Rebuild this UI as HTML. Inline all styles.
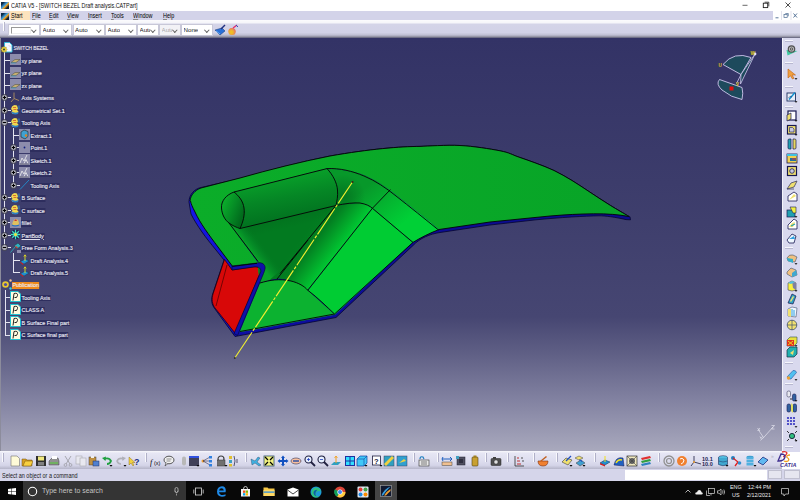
<!DOCTYPE html>
<html><head><meta charset="utf-8">
<style>
*{margin:0;padding:0;box-sizing:border-box}
html,body{width:800px;height:500px;overflow:hidden;background:#fff;font-family:"Liberation Sans",sans-serif}
.a{position:absolute}
#title{left:0;top:0;width:800px;height:11px;background:#fff}
#menu{left:0;top:11px;width:800px;height:9px;background:#d3d3e9}
#tb{left:0;top:20px;width:800px;height:18.5px;background:linear-gradient(#fbfbfd 0,#f6f6fa 2.5px,#d4d4e8 4.5px,#d2d2e7 12.5px,#c0c0d4 15px,#8c8c9c 17px,#383860 18.5px)}
#vp{border-left:1px solid #8c8c9c;left:0;top:38px;width:782px;height:413px;background:linear-gradient(#333366 0%,#3c3c6b 35%,#464672 67.5%,#5e5e84 76%,#8383a2 88%,#a9a9bd 100%)}
#rtb{left:782px;top:38px;width:18px;height:414px;background:#d9d9ee;border-left:1px solid #f4f4fb}
#btb{left:0;top:451px;width:782px;height:18px;background:linear-gradient(#f8f8fc,#e6e6f4 12%,#dcdcee 60%,#d4d4e8 80%,#b4b4c8)}
#sb{left:0;top:469px;width:800px;height:12px;background:#d5d5ea}
#task{left:0;top:481px;width:800px;height:19px;background:#080808}
.t{position:absolute;white-space:nowrap;line-height:1;font-size:5.5px;color:#1a1a1a}
.m{position:absolute;white-space:nowrap;line-height:1;font-size:6.3px;color:#000;top:12.9px;transform:scaleX(0.87);transform-origin:0 0}
.m u{text-decoration:underline;text-decoration-thickness:0.4px;text-underline-offset:0.7px;text-decoration-color:#888}
.cb{position:absolute;top:24px;height:12px;background:#fff;border:1px solid #c8c8d8}
.cb span{position:absolute;left:1.5px;top:2.3px;font-size:6.2px;line-height:1;color:#222;overflow:hidden;white-space:nowrap}
.cb i{position:absolute;right:2.5px;top:4px;width:5px;height:3px;background:no-repeat center/5px 3px}
.cb i:before{content:"";position:absolute;left:0.9px;top:-1.2px;width:2.6px;height:2.6px;border-right:0.6px solid #666;border-bottom:0.6px solid #666;transform:rotate(45deg)}
.tt{position:absolute;white-space:nowrap;line-height:6.6px;height:6.6px;font-size:6.2px;color:#f2f2f8;padding:0 0.6px;background:#2e2e5e;transform:scaleX(0.875);transform-origin:0 0;-webkit-text-stroke:0.15px #e0e0ee}
svg{display:block}
</style></head><body>

<div id="title" class="a">
  <div class="a" style="left:1px;top:2px;width:8px;height:7px;background:linear-gradient(135deg,#0a2a4a 20%,#3fa0e0 45%,#f0a020 60%,#102030 80%)"></div>
  <div class="t" style="left:11px;top:2.9px;font-size:6.3px;color:#111;transform:scaleX(0.855);transform-origin:0 0">CATIA V5 - [SWITCH BEZEL Draft analysis.CATPart]</div>
  <svg class="a" style="left:740px;top:0" width="60" height="11" viewBox="0 0 60 11"><path d="M2.5 5.3h5" stroke="#444" stroke-width="0.8"/><rect x="23.3" y="3.2" width="4.4" height="4.4" fill="none" stroke="#222" stroke-width="0.9"/><path d="M24.6 2.2h4.2v4.2" fill="none" stroke="#222" stroke-width="0.8"/><path d="M45.5 2.5l5 5M50.5 2.5l-5 5" stroke="#222" stroke-width="0.8"/></svg></div>
</div>
<div id="menu" class="a">
  <div class="a" style="left:1px;top:1.5px;width:8px;height:7px;background:linear-gradient(135deg,#0a2a4a 20%,#3fa0e0 45%,#f0a020 60%,#102030 80%)"></div>
  <div class="a" style="left:10px;top:0;width:20px;height:9px;background:#fde3bd"></div>
  <svg class="a" style="left:773px;top:0" width="27" height="9" viewBox="0 0 27 9"><rect x="0" y="0" width="27" height="9" fill="#fff"/><path d="M8.5 0v9M18 0v9" stroke="#dcdce8" stroke-width="0.8"/><path d="M2.5 6.8h3" stroke="#4a6a90" stroke-width="0.9"/><rect x="11" y="3.5" width="3.2" height="3" fill="none" stroke="#4a6a90" stroke-width="0.7"/><path d="M12.3 2.5h3v2.8" fill="none" stroke="#4a6a90" stroke-width="0.7"/><path d="M20.5 2.5l3.5 4M24 2.5l-3.5 4" stroke="#4a6a90" stroke-width="0.9"/></svg></div>
</div>
<div class="m" style="left:11px"><u>S</u>tart</div>
<div class="m" style="left:31.5px"><u>F</u>ile</div>
<div class="m" style="left:48.5px"><u>E</u>dit</div>
<div class="m" style="left:67.4px"><u>V</u>iew</div>
<div class="m" style="left:87.5px"><u>I</u>nsert</div>
<div class="m" style="left:111px"><u>T</u>ools</div>
<div class="m" style="left:133.4px"><u>W</u>indow</div>
<div class="m" style="left:163px"><u>H</u>elp</div>
<div id="tb" class="a">
  <div class="a" style="left:3px;top:2px;width:2px;height:9px;background:#fff;border-right:1px solid #b8b8cc"></div>
</div>
<div class="cb" style="left:8px;width:32px"><div class="a" style="left:2px;top:2px;width:20px;height:7px;border:1px solid #999;border-right-color:#eee;border-bottom-color:#eee"></div><i></i></div>
<div class="cb" style="left:40px;width:32px"><span>Auto</span><i></i></div>
<div class="cb" style="left:72.5px;width:32px"><span>Auto</span><i></i></div>
<div class="cb" style="left:105px;width:31.5px"><span>Auto</span><i></i></div>
<div class="cb" style="left:137px;width:21.5px"><span style="width:10.5px">Auto</span><i></i></div>
<div class="cb" style="left:159px;width:21.5px;background:#f2f2f6"><span style="color:#aaa;width:10.5px">Auto</span><i></i></div>
<div class="cb" style="left:181px;width:31.5px"><span style="top:1.8px">None</span><i></i></div>
<svg class="a" style="left:213.5px;top:23.5px" width="12" height="12" viewBox="0 0 12 12"><path d="M1 6 L6 11 L11 7 L8 4z" fill="#2a70d8" stroke="#103070" stroke-width="0.5"/><path d="M7 5 L11 1" stroke="#203080" stroke-width="1.5"/><path d="M2 7 L6 10" stroke="#80c0ff" stroke-width="0.8"/></svg>
<svg class="a" style="left:227px;top:23.5px" width="12" height="12" viewBox="0 0 12 12"><circle cx="5" cy="7.5" r="3.6" fill="#f0c020"/><circle cx="5" cy="7.5" r="3.6" fill="url(#ballg)"/><path d="M6 4 L10 1" stroke="#e03070" stroke-width="1.4"/><path d="M9 1 L11 3" stroke="#3050c0" stroke-width="1"/><defs><radialGradient id="ballg" cx="0.4" cy="0.6" r="0.6"><stop offset="0" stop-color="#f0d030" stop-opacity="0"/><stop offset="1" stop-color="#e04090" stop-opacity="0.7"/></radialGradient></defs></svg>
<div id="vp" class="a"></div>
<div id="rtb" class="a"></div>
<div id="btb" class="a"></div>
<div id="sb" class="a">
  <div class="t" style="left:2px;top:4.1px;font-size:6.3px;color:#1a1a1a;transform:scaleX(0.87);transform-origin:0 0">Select an object or a command</div>
  <div class="a" style="left:625px;top:1px;width:142px;height:9.5px;background:#fff"></div>
  <div class="a" style="left:768px;top:1px;width:14px;height:9px;background:#e6e6f0;border:1px solid #c0c0d0"></div>
  <div class="a" style="left:784px;top:1px;width:16px;height:9px;background:#e6e6f0;border:1px solid #c0c0d0"></div>
</div>
<div id="task" class="a">
  <svg class="a" style="left:7.5px;top:7px" width="8" height="7" viewBox="0 0 8 7"><path d="M0 1 L3.5 0.5 V3.2 H0z M4 0.4 L8 0 V3.2 H4z M0 3.7 H3.5 V6.5 L0 6z M4 3.7 H8 V7 L4 6.6z" fill="#fff"/></svg>
  <div class="a" style="left:22.5px;top:0;width:163.5px;height:20px;background:#343434"></div>
  <svg class="a" style="left:26.5px;top:5px" width="11" height="11" viewBox="0 0 11 11"><circle cx="5.5" cy="5.5" r="4.2" fill="none" stroke="#fff" stroke-width="1.1"/></svg>
  <div class="t" style="left:42px;top:7.3px;font-size:6.9px;color:#c4c4c4">Type here to search</div>
  <svg class="a" style="left:174px;top:6px" width="5" height="9" viewBox="0 0 5 9"><rect x="1" y="0.5" width="3" height="5" rx="1.5" fill="none" stroke="#bbb" stroke-width="0.8"/><path d="M0.5 4 Q2.5 7 4.5 4 M2.5 6.5 V8.5" stroke="#bbb" stroke-width="0.7" fill="none"/></svg>
  <svg class="a" style="left:193px;top:6px" width="11" height="9" viewBox="0 0 11 9"><rect x="2.5" y="1" width="6" height="7" fill="none" stroke="#ddd" stroke-width="0.8"/><path d="M0.8 2.5 V6.5 M10.2 2.5 V6.5" stroke="#ddd" stroke-width="0.8"/></svg>
  <svg class="a" style="left:216px;top:5px" width="11" height="11" viewBox="0 0 11 11"><path d="M9.5 6.2 H3 Q3.5 9 6.5 9 Q8.5 9 9.5 8.2 V10 Q8 10.8 6 10.8 Q1 10.5 1 5.5 Q1.2 0.5 6 0.3 Q10 0.5 9.8 5 Z M3 4.5 H7.8 Q7.5 2.2 5.5 2.2 Q3.5 2.3 3 4.5z" fill="#1e88e5"/></svg>
  <svg class="a" style="left:239.5px;top:5px" width="11" height="11" viewBox="0 0 11 11"><path d="M3.5 3 Q3.5 0.5 5.5 0.5 Q7.5 0.5 7.5 3" fill="none" stroke="#eee" stroke-width="0.8"/><rect x="1" y="3" width="9" height="7.5" fill="#f4f4f4"/><rect x="3" y="4.5" width="2.3" height="2.3" fill="#f25022"/><rect x="5.7" y="4.5" width="2.3" height="2.3" fill="#7fba00"/><rect x="3" y="7.2" width="2.3" height="2.3" fill="#00a4ef"/><rect x="5.7" y="7.2" width="2.3" height="2.3" fill="#ffb900"/></svg>
  <svg class="a" style="left:263px;top:5px" width="12" height="11" viewBox="0 0 12 11"><path d="M0.5 1.5 H4.5 L5.5 2.5 H11.5 V10 H0.5z" fill="#f8c846"/><rect x="0.5" y="4" width="11" height="6" fill="#ffd865"/><rect x="0.5" y="5.5" width="11" height="1.2" fill="#1e88e5"/></svg>
  <svg class="a" style="left:286.5px;top:5.5px" width="12" height="10" viewBox="0 0 12 10"><path d="M0.5 2.5 L6 0.5 L11.5 2.5 V9.5 H0.5z" fill="#fff"/><path d="M0.5 3 L6 7 L11.5 3" fill="none" stroke="#333" stroke-width="0.9"/></svg>
  <svg class="a" style="left:310px;top:5px" width="12" height="12" viewBox="0 0 12 12"><circle cx="6" cy="6" r="5.5" fill="#1d9ad8"/><path d="M1.5 6.5 Q2 2 6.5 1.5 Q10 1.8 10.8 5.5 Q9 4.5 7 5.5 Q5 7 6 9.5 Q7 11 10 10.5 Q7.5 12 4.5 11.3 Q1 10 1.5 6.5z" fill="#2ec27e"/><path d="M3.5 6.5 Q4 3.5 7.5 3.8 Q6 5 5.5 7 Q5 9 6.5 10.5 Q3.5 9.5 3.5 6.5z" fill="#0f5fa8"/></svg>
  <svg class="a" style="left:333.5px;top:5px" width="12" height="12" viewBox="0 0 12 12"><circle cx="6" cy="6" r="5.5" fill="#db4437"/><path d="M6 6 L0.8 3.2 A5.5 5.5 0 0 0 3.3 10.8z" fill="#0f9d58"/><path d="M6 6 L3.3 10.8 A5.5 5.5 0 0 0 11.5 6z" fill="#ffcd40"/><circle cx="6" cy="6" r="2.6" fill="#fff"/><circle cx="6" cy="6" r="2" fill="#4285f4"/></svg>
  <svg class="a" style="left:357px;top:5px" width="12" height="12" viewBox="0 0 12 12"><rect x="0.5" y="0.5" width="11" height="11" rx="1" fill="#dfe6f0"/><circle cx="3.5" cy="3.5" r="2" fill="#e53935"/><circle cx="8.5" cy="3.5" r="2" fill="#43a047"/><circle cx="3.5" cy="8.5" r="2" fill="#1e88e5"/><circle cx="8.5" cy="8.5" r="2" fill="#fb8c00"/></svg>
  <div class="a" style="left:375px;top:0;width:22px;height:20px;background:#444"></div>
  <svg class="a" style="left:380px;top:4px" width="12" height="12" viewBox="0 0 12 12"><rect x="0.5" y="0.5" width="11" height="11" fill="#101830" stroke="#aaa" stroke-width="0.6"/><path d="M1.5 10.5 Q4 4 10.5 1.5 Q6 6 3 10.5z" fill="#3aa0e0"/><path d="M4 10.5 Q7 6 10.5 4 V6 Q8 8 6 10.5z" fill="#f0a030"/></svg>
  <div class="a" style="left:258px;top:19px;width:21px;height:1px;background:#76b9ed"></div>
  <div class="a" style="left:329px;top:19px;width:21px;height:1px;background:#76b9ed"></div>
  <div class="a" style="left:352px;top:19px;width:21px;height:1px;background:#76b9ed"></div>
  <div class="a" style="left:375px;top:19px;width:22px;height:1px;background:#99ccf3"></div>
  <svg class="a" style="left:685px;top:8px" width="6" height="4" viewBox="0 0 6 4"><path d="M0.5 3.5 L3 1 L5.5 3.5" fill="none" stroke="#ddd" stroke-width="0.8"/></svg>
  <svg class="a" style="left:694.5px;top:7.5px" width="8" height="6" viewBox="0 0 8 6"><path d="M1.5 5.5 Q0 5.5 0.3 4 Q0.8 3 2 3.2 Q2.5 1 4.5 1 Q6.5 1.2 6.5 3.2 Q8 3.5 7.8 4.5 Q7.6 5.5 6.5 5.5z" fill="#eee"/></svg>
  <svg class="a" style="left:705.5px;top:6.5px" width="9" height="8" viewBox="0 0 9 8"><rect x="2.5" y="0.5" width="6" height="5" fill="none" stroke="#ddd" stroke-width="0.7"/><path d="M0.5 2.5 V7.5 H4 M5 5.5 V7.5" stroke="#ddd" stroke-width="0.7" fill="none"/></svg>
  <svg class="a" style="left:716.5px;top:6.5px" width="9" height="8" viewBox="0 0 9 8"><path d="M0.5 2.8 H2 L4 1 V7 L2 5.2 H0.5z" fill="none" stroke="#ddd" stroke-width="0.7"/><path d="M5.5 2.5 Q6.5 4 5.5 5.5 M6.8 1.5 Q8.5 4 6.8 6.5" fill="none" stroke="#ddd" stroke-width="0.7"/></svg>
  <div class="t" style="left:730px;top:4px;font-size:5.4px;color:#eee">ENG</div>
  <div class="t" style="left:732px;top:11.5px;font-size:5.4px;color:#eee">US</div>
  <div class="t" style="left:748px;top:4px;font-size:5.4px;color:#eee">12:44 PM</div>
  <div class="t" style="left:747px;top:11.5px;font-size:5.4px;color:#eee">2/12/2021</div>
  <svg class="a" style="left:780.5px;top:6.5px" width="8" height="9" viewBox="0 0 8 9"><path d="M0.5 0.5 H7.5 V6 H4.5 L3 8 L2.8 6 H0.5z" fill="none" stroke="#ddd" stroke-width="0.7"/></svg>
</div>
</div>

<svg class="a" style="left:0;top:0" width="800" height="500" viewBox="0 0 800 500">
<defs><linearGradient id="gBlue" gradientUnits="userSpaceOnUse" x1="190" y1="0" x2="630" y2="0"><stop offset="0" stop-color="#1616e8"/><stop offset="0.08" stop-color="#1313d0"/><stop offset="0.11" stop-color="#0e0ea6"/><stop offset="0.4" stop-color="#0c0c96"/><stop offset="1" stop-color="#0c0c8c"/></linearGradient>
<linearGradient id="gWing" x1="0" y1="0" x2="1" y2="0"><stop offset="0" stop-color="#0bad29"/><stop offset="1" stop-color="#08a427"/></linearGradient>
<linearGradient id="gCyl" gradientUnits="userSpaceOnUse" x1="280" y1="178" x2="287" y2="218"><stop offset="0" stop-color="#089e29"/><stop offset="0.5" stop-color="#058625"/><stop offset="1" stop-color="#027420"/></linearGradient><radialGradient id="gShade" gradientUnits="userSpaceOnUse" cx="343" cy="196" r="22"><stop offset="0" stop-color="#015a18" stop-opacity="0.55"/><stop offset="1" stop-color="#015a18" stop-opacity="0"/></radialGradient><linearGradient id="gShade2" gradientUnits="userSpaceOnUse" x1="275" y1="205" x2="281" y2="230"><stop offset="0" stop-color="#014f15" stop-opacity="0.35"/><stop offset="1" stop-color="#014f15" stop-opacity="0"/></linearGradient>
<linearGradient id="gPocket" gradientUnits="userSpaceOnUse" x1="310" y1="226" x2="340" y2="249"><stop offset="0" stop-color="#027a20"/><stop offset="0.35" stop-color="#037f21"/><stop offset="0.7" stop-color="#03a62a"/><stop offset="1" stop-color="#00c832"/></linearGradient>
<linearGradient id="gFil" gradientUnits="userSpaceOnUse" x1="372" y1="182" x2="405" y2="222"><stop offset="0" stop-color="#07982a"/><stop offset="0.5" stop-color="#04b530"/><stop offset="1" stop-color="#00d036"/></linearGradient>
<linearGradient id="gEnd" gradientUnits="userSpaceOnUse" x1="224" y1="204" x2="244" y2="212"><stop offset="0" stop-color="#0aa82a"/><stop offset="0.5" stop-color="#058a25"/><stop offset="1" stop-color="#016a1c"/></linearGradient>
<linearGradient id="gWall" gradientUnits="userSpaceOnUse" x1="243.5" y1="242" x2="255" y2="233.3"><stop offset="0" stop-color="#0aa82b" stop-opacity="0.9"/><stop offset="0.5" stop-color="#06922a" stop-opacity="0.5"/><stop offset="1" stop-color="#027a20" stop-opacity="0"/></linearGradient><clipPath id="cPocket"><path d="M234 192 L327 168.6 C333 175 337 183 337.5 190 C338 196 337 201 336 205.5 C345 204 354 203 360 203 C366 204 370 206 372.4 208.3 L307.6 290.4 C300 284 292 280 279 278.5 C272 279 266 281 260 283 C259 277 258 268 258 261.5 L229 223 C225 220 222 215 221.5 208 C221 201 226 195 234 192 Z"/></clipPath></defs>
<!-- blue silhouette -->
<path d="M189 202 C189 195 194 189 201 187.5 L240 178.5 C270 170 300 162 330 156 C370 149 400 146.5 420 146.4 C426.7 146.2 446.7 144.8 460 145.5 C473.3 146.2 490.3 148.9 500 150.8 C509.7 152.7 512.0 154.7 518 156.8 C524.0 158.9 530.0 160.9 536 163.2 C542.0 165.5 548.0 167.6 554 170.5 C560.0 173.4 566.0 176.9 572 180.5 C578.0 184.1 584.0 188.3 590 192.2 C596.0 196.1 602.0 200.2 608 203.9 C614.0 207.7 622.3 212.5 626 214.7 C629.7 216.8 629.3 216.5 630 216.8 L630.5 219.8 L626 219.6 C615 217 605 215.8 599 215.8 C585 216 560 217.5 536 219.8 L490 225 L440 232.5 C430 234 420 238 413 245.5 L336 317.5 L235 336.5 L215 309 C211 304 211 299 213 293 L224 260 L216 250 C206 238 197 226 191 214 Z" fill="url(#gBlue)" stroke="#050530" stroke-width="0.8"/>
<!-- red face -->
<path d="M224.5 259.5 L232 270 L254 266.8 C258 266.5 261 268 261 271 L235 333 L215 308 C212 304 211.5 299 213 294 Z" fill="#d80808" stroke="#200" stroke-width="0.7"/>
<path d="M227 265 L216 306" stroke="#300" stroke-width="0.6" fill="none"/>
<!-- bottom floor (medium green) + bright wall -->
<path d="M239.5 332.3 L260 283 C270 280 279 278.5 291 281 C299 283 304 286 308 290.4 L334.8 314.8 Z" fill="#0cb230" />
<path d="M308 290.4 C318 298 326 306 334.8 314.8 L412.5 242.5 C398 230 385 219 372.4 208.3 Z" fill="#00cc33"/>
<!-- wing/flange top -->
<path d="M190 201 C190.5 195 195 190 201 188 L240 178 C270 169.5 300 162 330 156 C370 149 400 146.5 420 146.4 C426.7 146.2 446.7 144.8 460 145.5 C473.3 146.2 490.3 148.9 500 150.8 C509.7 152.7 512.0 154.7 518 156.8 C524.0 158.9 530.0 160.9 536 163.2 C542.0 165.5 548.0 167.6 554 170.5 C560.0 173.4 566.0 176.9 572 180.5 C578.0 184.1 584.0 188.3 590 192.2 C596.0 196.1 602.0 200.2 608 203.9 C614.0 207.7 622.3 212.5 626 214.7 C629.7 216.8 629.3 216.5 628.5 216.5 C610 212.5 580 213.5 550 216 L490 222 L439 229.5 C430 221 420 214 414 209 C405 202 398 196 390 190.5 C380 183 365 173 348 171 C340 169.5 333 168.5 327 168.6 L234 192 C226 195 221 201 221.5 208 C222 215 225 220 229 223 L257.5 262 C258.5 262.5 258.5 263 257 263.3 L232.6 266.4 L218 247 C209 235 200 223 195 212 C192.5 207 191 204 190.5 201 Z" fill="url(#gWing)"/>
<!-- pocket -->
<path d="M234 192 L327 168.6 C333 175 337 183 337.5 190 C338 196 337 201 336 205.5 C345 204 354 203 360 203 C366 204 370 206 372.4 208.3 L307.6 290.4 C300 284 292 280 279 278.5 C272 279 266 281 260 283 C259 277 258 268 258 261.5 L229 223 C225 220 222 215 221.5 208 C221 201 226 195 234 192 Z" fill="url(#gPocket)"/>
<!-- cylinder surface -->
<path d="M234 192 L327 168.6 C333 175 337 183 337.5 190 C338 196 337 201 336 205.5 L240 228.5 C243 222 245 215 244 208 C243 201 239 196 234 192 Z" fill="url(#gCyl)"/>
<!-- cylinder end cap -->
<path d="M234 192 C239 196 243 201 244 208 C245 215 243 222 240 228.5 C235 227 231 226 229 223 C225 220 222 215 221.5 208 C221 201 226 195 234 192 Z" fill="url(#gEnd)"/>
<!-- wall fillet -->
<path d="M327 168.6 C333 168.5 340 169.5 348 171 C365 173 380 183 390 190.5 C398 196 405 202 414 209 C420 214 430 221 439 229.5 C430 233 420 238 413 242.4 L372.4 208.3 C370 206 366 204 360 203 C354 203 345 204 336 205.5 C337 201 338 196 337.5 190 C337 183 333 175 327 168.6 Z" fill="url(#gFil)"/>
<path d="M327 168.6 C340 168 352 171 364 176 C376 181 386 188 390.4 189.6 L372.4 208.3 C366 204 354 203 336 205.5 C337 201 338 196 337.5 190 C337 183 333 175 327 168.6 Z" fill="url(#gShade)"/>
<path d="M240 228.5 L336 205.5 L320 225 L250 245 Z" fill="url(#gShade2)"/>
<path d="M226 222 L240 228.5 L270 221.3 L290 262 L258 290 Z" fill="url(#gWall)" clip-path="url(#cPocket)"/>
<!-- flange underside green strip near red -->
<path d="M229 223 L258 261.5 C261 262.5 263 264 263.5 266 L261 276 L260 283 C259 277 258.5 268 258 261.5" fill="#057a20"/>
<path d="M232 266 L257 263 C260.5 262.3 264 263 265 266.5 C265.5 268.5 264.5 271 263.5 273.5 L237.5 335.5 L234 333.5 L260.8 271.5 C261 268.5 259 266.8 255 266.8 L232 270 Z" fill="#1010a8" stroke="#050530" stroke-width="0.6"/>
<!-- lines -->
<g fill="none" stroke="#050505" stroke-width="0.9">
<path d="M234 192 L327 168.6 C340 168 352 171 364 176 C376 181 386 188 396 196 C410 207 425 219 438.5 230"/>
<path d="M234 192 C226 195 221 201 221.5 208 C222 215 225 220 229 223 C233 226 237 227.5 240 228.5"/>
<path d="M234 192 C239 196 243 201 244 208 C245 215 243 222 240 228.5 L336 205.5"/>
<path d="M327 168.6 C333 175 337 183 337.5 190 C338 196 337 201 336 205.5 C345 203.5 354 202.5 360 203 C366 204 370 206 372.4 208.3"/>
<path d="M390.4 189.6 L372.4 208.3 L307.6 290.4"/>
<path d="M372.4 208.3 L413 242.4"/>
<path d="M229 223 L258 261.5"/>
<path d="M336 205.5 L280 273.6"/>
<path d="M260 283 C270 280 279 278.5 291 281 C299 283 304 286 308 290.4 C318 298 326 306 334.5 314"/>
<path d="M277 279 L308 240"/>
<path d="M190 201 C190.5 195 195 190 201 188 L240 178 C270 169.5 300 162 330 156 C370 149 400 146.5 420 146.4 C426.7 146.2 446.7 144.8 460 145.5 C473.3 146.2 490.3 148.9 500 150.8 C509.7 152.7 512.0 154.7 518 156.8 C524.0 158.9 530.0 160.9 536 163.2 C542.0 165.5 548.0 167.6 554 170.5 C560.0 173.4 566.0 176.9 572 180.5 C578.0 184.1 584.0 188.3 590 192.2 C596.0 196.1 602.0 200.2 608 203.9 C614.0 207.7 622.3 212.5 626 214.7 C629.7 216.8 629.3 216.5 628.5 216.5"/>
<path d="M628.5 216.5 C610 212.5 580 213.5 550 216 L490 222 L439 229.5 C430 233 420 238 413 242.4 L334.5 314 L240 331.5"/>
<path d="M190.5 201 C191 204 192.5 207 195 212 C200 223 209 235 218 247 L232.6 266.4 L257 263.3"/>
</g>
<!-- yellow axis -->
<path d="M234.8 358 L352.5 182" stroke="#f0ee30" stroke-width="1.15" stroke-dasharray="31 1.6 3 1.6" fill="none"/>
<circle cx="352.5" cy="182" r="1" fill="#402010"/>
<circle cx="234.8" cy="358" r="1" fill="#303030"/>
<!-- compass -->
<g>
<path d="M723 64.5 Q734 51 751 57.5 L741 74.5 Z" fill="#1d4a5c" stroke="#cfc6ee" stroke-width="0.9" stroke-linejoin="round"/>
<path d="M741 74.5 L755 54 L740.5 84 Z" fill="#1d4a5c" stroke="#cfc6ee" stroke-width="0.8" stroke-linejoin="round"/>
<path d="M741 74.5 L736.5 83.5" stroke="#cfc6ee" stroke-width="0.8"/>
<path d="M719.5 79.5 Q715.5 84 722 90 Q731 97.5 742 99.5 Q743.5 93 742 87.5 Z" fill="#1d4a5c" stroke="#cfc6ee" stroke-width="0.9" stroke-linejoin="round"/>
<rect x="729.5" y="86.5" width="4" height="4" fill="#e01010"/>
<circle cx="755" cy="54" r="1.4" fill="#e8e0ff"/>
<text x="750.5" y="55" font-size="5" fill="#e0d020" font-family="Liberation Sans" font-weight="bold">W</text>
<text x="718.5" y="66.5" font-size="4.5" fill="#e0d020" font-family="Liberation Sans" font-weight="bold">U</text>
<text x="736" y="85.5" font-size="4.5" fill="#e0d020" font-family="Liberation Sans" font-weight="bold">V</text>
</g>
<g stroke="#f0f0f8" stroke-width="0.6" fill="none">
<path d="M763.6 437.6 L773.2 426.8 M763.6 437.6 L758.4 430 M763.6 437.6 L760.4 440.4"/>
<path d="M771.5 425.5 h3 l-3 3.5 h3 M757.5 428 l2.5 3 M760 428 l-2.5 3 M760 436.5 l1 2 l1.5-2"/>
</g>
</svg>

<div class="a" style="left:4px;top:52.0px;width:1px;height:195.7px;background:#e4e4f0"></div>
<div class="a" style="left:4px;top:60.0px;width:7px;height:1px;background:#e4e4f0"></div>
<div class="a" style="left:4px;top:72.5px;width:7px;height:1px;background:#e4e4f0"></div>
<div class="a" style="left:4px;top:84.9px;width:7px;height:1px;background:#e4e4f0"></div>
<div class="a" style="left:4px;top:97.4px;width:7px;height:1px;background:#e4e4f0"></div>
<div class="a" style="left:4px;top:109.9px;width:7px;height:1px;background:#e4e4f0"></div>
<div class="a" style="left:4px;top:122.4px;width:7px;height:1px;background:#e4e4f0"></div>
<div class="a" style="left:4px;top:197.3px;width:7px;height:1px;background:#e4e4f0"></div>
<div class="a" style="left:4px;top:209.7px;width:7px;height:1px;background:#e4e4f0"></div>
<div class="a" style="left:4px;top:222.2px;width:7px;height:1px;background:#e4e4f0"></div>
<div class="a" style="left:4px;top:234.7px;width:7px;height:1px;background:#e4e4f0"></div>
<div class="a" style="left:4px;top:247.2px;width:7px;height:1px;background:#e4e4f0"></div>
<div class="a" style="left:13px;top:127.9px;width:1px;height:57.4px;background:#e4e4f0"></div>
<div class="a" style="left:13px;top:134.9px;width:7px;height:1px;background:#e4e4f0"></div>
<div class="a" style="left:13px;top:147.3px;width:7px;height:1px;background:#e4e4f0"></div>
<div class="a" style="left:13px;top:159.8px;width:7px;height:1px;background:#e4e4f0"></div>
<div class="a" style="left:13px;top:172.3px;width:7px;height:1px;background:#e4e4f0"></div>
<div class="a" style="left:13px;top:184.8px;width:7px;height:1px;background:#e4e4f0"></div>
<div class="a" style="left:13px;top:252.7px;width:1px;height:20.0px;background:#e4e4f0"></div>
<div class="a" style="left:13px;top:259.7px;width:7px;height:1px;background:#e4e4f0"></div>
<div class="a" style="left:13px;top:272.1px;width:7px;height:1px;background:#e4e4f0"></div>
<div class="a" style="left:5px;top:290.1px;width:1px;height:44.9px;background:#e4e4f0"></div>
<div class="a" style="left:5px;top:297.1px;width:6px;height:1px;background:#e4e4f0"></div>
<div class="a" style="left:5px;top:309.6px;width:6px;height:1px;background:#e4e4f0"></div>
<div class="a" style="left:5px;top:322.1px;width:6px;height:1px;background:#e4e4f0"></div>
<div class="a" style="left:5px;top:334.5px;width:6px;height:1px;background:#e4e4f0"></div>
<div class="a" style="left:1.0px;top:94.4px;width:7px;height:7px"><svg width="7" height="7" viewBox="0 0 7 7"><circle cx="3.5" cy="3.5" r="3.1" fill="#a8a8b4" stroke="#2a2a3a" stroke-width="0.8"/><path d="M1.8 3.5h3.4" stroke="#000" stroke-width="1"/><path d="M3.5 1.8v3.4" stroke="#000" stroke-width="1"/></svg></div>
<div class="a" style="left:1.0px;top:106.9px;width:7px;height:7px"><svg width="7" height="7" viewBox="0 0 7 7"><circle cx="3.5" cy="3.5" r="3.1" fill="#a8a8b4" stroke="#2a2a3a" stroke-width="0.8"/><path d="M1.8 3.5h3.4" stroke="#000" stroke-width="1"/><path d="M3.5 1.8v3.4" stroke="#000" stroke-width="1"/></svg></div>
<div class="a" style="left:1.0px;top:119.4px;width:7px;height:7px"><svg width="7" height="7" viewBox="0 0 7 7"><circle cx="3.5" cy="3.5" r="3.1" fill="#a8a8b4" stroke="#2a2a3a" stroke-width="0.8"/><path d="M1.8 3.5h3.4" stroke="#000" stroke-width="1"/></svg></div>
<div class="a" style="left:10.0px;top:144.3px;width:7px;height:7px"><svg width="7" height="7" viewBox="0 0 7 7"><circle cx="3.5" cy="3.5" r="3.1" fill="#a8a8b4" stroke="#2a2a3a" stroke-width="0.8"/><path d="M1.8 3.5h3.4" stroke="#000" stroke-width="1"/><path d="M3.5 1.8v3.4" stroke="#000" stroke-width="1"/></svg></div>
<div class="a" style="left:10.0px;top:156.8px;width:7px;height:7px"><svg width="7" height="7" viewBox="0 0 7 7"><circle cx="3.5" cy="3.5" r="3.1" fill="#a8a8b4" stroke="#2a2a3a" stroke-width="0.8"/><path d="M1.8 3.5h3.4" stroke="#000" stroke-width="1"/><path d="M3.5 1.8v3.4" stroke="#000" stroke-width="1"/></svg></div>
<div class="a" style="left:10.0px;top:169.3px;width:7px;height:7px"><svg width="7" height="7" viewBox="0 0 7 7"><circle cx="3.5" cy="3.5" r="3.1" fill="#a8a8b4" stroke="#2a2a3a" stroke-width="0.8"/><path d="M1.8 3.5h3.4" stroke="#000" stroke-width="1"/><path d="M3.5 1.8v3.4" stroke="#000" stroke-width="1"/></svg></div>
<div class="a" style="left:10.0px;top:181.8px;width:7px;height:7px"><svg width="7" height="7" viewBox="0 0 7 7"><circle cx="3.5" cy="3.5" r="3.1" fill="#a8a8b4" stroke="#2a2a3a" stroke-width="0.8"/><path d="M1.8 3.5h3.4" stroke="#000" stroke-width="1"/><path d="M3.5 1.8v3.4" stroke="#000" stroke-width="1"/></svg></div>
<div class="a" style="left:1.0px;top:194.3px;width:7px;height:7px"><svg width="7" height="7" viewBox="0 0 7 7"><circle cx="3.5" cy="3.5" r="3.1" fill="#a8a8b4" stroke="#2a2a3a" stroke-width="0.8"/><path d="M1.8 3.5h3.4" stroke="#000" stroke-width="1"/><path d="M3.5 1.8v3.4" stroke="#000" stroke-width="1"/></svg></div>
<div class="a" style="left:1.0px;top:206.7px;width:7px;height:7px"><svg width="7" height="7" viewBox="0 0 7 7"><circle cx="3.5" cy="3.5" r="3.1" fill="#a8a8b4" stroke="#2a2a3a" stroke-width="0.8"/><path d="M1.8 3.5h3.4" stroke="#000" stroke-width="1"/><path d="M3.5 1.8v3.4" stroke="#000" stroke-width="1"/></svg></div>
<div class="a" style="left:1.0px;top:219.2px;width:7px;height:7px"><svg width="7" height="7" viewBox="0 0 7 7"><circle cx="3.5" cy="3.5" r="3.1" fill="#a8a8b4" stroke="#2a2a3a" stroke-width="0.8"/><path d="M1.8 3.5h3.4" stroke="#000" stroke-width="1"/><path d="M3.5 1.8v3.4" stroke="#000" stroke-width="1"/></svg></div>
<div class="a" style="left:1.0px;top:231.7px;width:7px;height:7px"><svg width="7" height="7" viewBox="0 0 7 7"><circle cx="3.5" cy="3.5" r="3.1" fill="#a8a8b4" stroke="#2a2a3a" stroke-width="0.8"/><path d="M1.8 3.5h3.4" stroke="#000" stroke-width="1"/><path d="M3.5 1.8v3.4" stroke="#000" stroke-width="1"/></svg></div>
<div class="a" style="left:1.0px;top:244.2px;width:7px;height:7px"><svg width="7" height="7" viewBox="0 0 7 7"><circle cx="3.5" cy="3.5" r="3.1" fill="#a8a8b4" stroke="#2a2a3a" stroke-width="0.8"/><path d="M1.8 3.5h3.4" stroke="#000" stroke-width="1"/></svg></div>
<div class="a" style="left:0.5px;top:41.5px;width:12px;height:12px"><svg width="12" height="12" viewBox="0 0 12 12"><path d="M3.5 0.5h5l2.5 2.5v7h-7.5z" fill="#f4f8ff" stroke="#30c0e0" stroke-width="0.9"/><path d="M8 3.5l1 1" stroke="#e04060" stroke-width="0.5"/><g transform="translate(3,7.5)"><path d="M0 -3.3L0.9 -2.2 2.3 -2.5 2.3 -1.1 3.3 0 2.3 1.1 2.3 2.5 0.9 2.2 0 3.3 -0.9 2.2 -2.3 2.5 -2.3 1.1 -3.3 0 -2.3 -1.1 -2.3 -2.5 -0.9 -2.2z" fill="#e8d040" stroke="#807020" stroke-width="0.3"/><circle r="1.1" fill="#405030"/></g></svg></div>
<div class="tt" style="left:12.5px;top:45.3px;letter-spacing:-0.15px;background:none;transform:scaleX(0.79);">SWITCH BEZEL</div>
<div class="a" style="left:10px;top:54.3px;width:12px;height:12px"><svg width="11" height="11" viewBox="0 0 11 11"><rect x="0" y="0" width="11" height="11" fill="#8c8cac"/><path d="M1 8.5l4-3h5l-4 3z" fill="#c8b070" stroke="#4a4a40" stroke-width="0.5"/><path d="M1 9l5 0" stroke="#3aa0c0" stroke-width="0.7"/></svg></div>
<div class="tt" style="left:21.1px;top:57.8px;">xy plane</div>
<div class="a" style="left:10px;top:66.8px;width:12px;height:12px"><svg width="11" height="11" viewBox="0 0 11 11"><rect x="0" y="0" width="11" height="11" fill="#8c8cac"/><path d="M1 8.5l4-3h5l-4 3z" fill="#c8b070" stroke="#4a4a40" stroke-width="0.5"/><path d="M1 9l5 0" stroke="#3aa0c0" stroke-width="0.7"/></svg></div>
<div class="tt" style="left:21.1px;top:70.3px;">yz plane</div>
<div class="a" style="left:10px;top:79.2px;width:12px;height:12px"><svg width="11" height="11" viewBox="0 0 11 11"><rect x="0" y="0" width="11" height="11" fill="#8c8cac"/><path d="M1 8.5l4-3h5l-4 3z" fill="#c8b070" stroke="#4a4a40" stroke-width="0.5"/><path d="M1 9l5 0" stroke="#3aa0c0" stroke-width="0.7"/></svg></div>
<div class="tt" style="left:21.1px;top:82.7px;">zx plane</div>
<div class="a" style="left:10px;top:91.7px;width:12px;height:12px"><svg width="11" height="11" viewBox="0 0 11 11"><path d="M4 0.5v6l-3 3.5M4 6.5l5 2" fill="none" stroke="#b09060" stroke-width="0.9"/></svg></div>
<div class="tt" style="left:21.1px;top:95.2px;">Axis Systems</div>
<div class="a" style="left:10px;top:104.2px;width:12px;height:12px"><svg width="11" height="11" viewBox="0 0 11 11"><path d="M2 2.5q2-2.5 5-1l1 3-1 1.5 1.5 1.5-1 2.5h-5l-1-2 1-1.5-1.5-1.5z" fill="#f0d850"/><path d="M1.5 7.5q3 2 7 0.5l-0.5 2q-3 1-6-0.5z" fill="#2a80c8"/><path d="M3 3.5h3M3.5 5.5h3" stroke="#d04020" stroke-width="0.7"/><path d="M9 1.5v4" stroke="#30a0e0" stroke-width="0.8"/></svg></div>
<div class="tt" style="left:21.1px;top:107.7px;">Geometrical Set.1</div>
<div class="a" style="left:10px;top:116.7px;width:12px;height:12px"><svg width="11" height="11" viewBox="0 0 11 11"><path d="M2 2.5q2-2.5 5-1l1 3-1 1.5 1.5 1.5-1 2.5h-5l-1-2 1-1.5-1.5-1.5z" fill="#f0d850"/><path d="M1.5 7.5q3 2 7 0.5l-0.5 2q-3 1-6-0.5z" fill="#2a80c8"/><path d="M3 3.5h3M3.5 5.5h3" stroke="#d04020" stroke-width="0.7"/><path d="M9 1.5v4" stroke="#30a0e0" stroke-width="0.8"/></svg></div>
<div class="tt" style="left:21.1px;top:120.2px;">Tooling Axis</div>
<div class="a" style="left:19px;top:129.2px;width:12px;height:12px"><svg width="11" height="11" viewBox="0 0 11 11"><rect x="0" y="0" width="11" height="11" fill="#8c8cac"/><path d="M2 3l3-2 4 1.5v5l-3 2.5-4-2z" fill="#40a0d0" stroke="#222" stroke-width="0.6"/><circle cx="7" cy="6.5" r="1.2" fill="#e08020"/></svg></div>
<div class="tt" style="left:30.0px;top:132.7px;">Extract.1</div>
<div class="a" style="left:19px;top:141.6px;width:12px;height:12px"><svg width="11" height="11" viewBox="0 0 11 11"><rect x="0" y="0" width="11" height="11" fill="#8c8cac"/><circle cx="5.5" cy="5.5" r="0.9" fill="#102080"/></svg></div>
<div class="tt" style="left:30.0px;top:145.1px;">Point.1</div>
<div class="a" style="left:19px;top:154.1px;width:12px;height:12px"><svg width="11" height="11" viewBox="0 0 11 11"><rect x="0" y="0" width="11" height="11" fill="#8c8cac"/><path d="M1 9l2-5 2 3 3-6M5 9.5l2-4 2 4" fill="none" stroke="#f0f0f0" stroke-width="0.8"/><path d="M1 10h9" stroke="#555" stroke-width="0.5"/></svg></div>
<div class="tt" style="left:30.0px;top:157.6px;">Sketch.1</div>
<div class="a" style="left:19px;top:166.6px;width:12px;height:12px"><svg width="11" height="11" viewBox="0 0 11 11"><rect x="0" y="0" width="11" height="11" fill="#8c8cac"/><path d="M1 9l2-5 2 3 3-6M5 9.5l2-4 2 4" fill="none" stroke="#f0f0f0" stroke-width="0.8"/><path d="M1 10h9" stroke="#555" stroke-width="0.5"/></svg></div>
<div class="tt" style="left:30.0px;top:170.1px;">Sketch.2</div>
<div class="a" style="left:19px;top:179.1px;width:12px;height:12px"><svg width="11" height="11" viewBox="0 0 11 11"><path d="M1 10.5L10 1" stroke="#2090d0" stroke-width="0.9"/></svg></div>
<div class="tt" style="left:30.0px;top:182.6px;">Tooling Axis</div>
<div class="a" style="left:10px;top:191.6px;width:12px;height:12px"><svg width="11" height="11" viewBox="0 0 11 11"><path d="M2 2.5q2-2.5 5-1l1 3-1 1.5 1.5 1.5-1 2.5h-5l-1-2 1-1.5-1.5-1.5z" fill="#f0d850"/><path d="M1.5 7.5q3 2 7 0.5l-0.5 2q-3 1-6-0.5z" fill="#2a80c8"/><path d="M3 3.5h3M3.5 5.5h3" stroke="#d04020" stroke-width="0.7"/><path d="M9 1.5v4" stroke="#30a0e0" stroke-width="0.8"/></svg></div>
<div class="tt" style="left:21.1px;top:195.1px;">B Surface</div>
<div class="a" style="left:10px;top:204.0px;width:12px;height:12px"><svg width="11" height="11" viewBox="0 0 11 11"><path d="M2 2.5q2-2.5 5-1l1 3-1 1.5 1.5 1.5-1 2.5h-5l-1-2 1-1.5-1.5-1.5z" fill="#f0d850"/><path d="M1.5 7.5q3 2 7 0.5l-0.5 2q-3 1-6-0.5z" fill="#2a80c8"/><path d="M3 3.5h3M3.5 5.5h3" stroke="#d04020" stroke-width="0.7"/><path d="M9 1.5v4" stroke="#30a0e0" stroke-width="0.8"/></svg></div>
<div class="tt" style="left:21.1px;top:207.5px;">C surface</div>
<div class="a" style="left:10px;top:216.5px;width:12px;height:12px"><svg width="11" height="11" viewBox="0 0 11 11"><rect x="0" y="0" width="11" height="11" fill="#8c8cac"/><path d="M2 8q1-6 4-6t3 6z" fill="#e0c060"/><path d="M2 8q3 2 7 0" stroke="#2070c0" stroke-width="1.2" fill="none"/><path d="M4 4l2-2 1 2z" fill="#d03030"/></svg></div>
<div class="tt" style="left:21.1px;top:220.0px;">fillet</div>
<div class="a" style="left:10px;top:229.0px;width:12px;height:12px"><svg width="11" height="11" viewBox="0 0 11 11"><circle cx="5.5" cy="5.5" r="4.8" fill="#1a1a50"/><path d="M5.5 0.8v9.4M0.8 5.5h9.4M2.2 2.2l6.6 6.6M8.8 2.2l-6.6 6.6" stroke="#40e0c0" stroke-width="1.3"/><circle cx="5.5" cy="5.5" r="1.5" fill="#f0e040"/></svg></div>
<div class="tt" style="left:21.1px;top:232.5px;text-decoration:underline;">PartBody</div>
<div class="a" style="left:10px;top:241.5px;width:12px;height:12px"><svg width="12" height="11" viewBox="0 0 12 11"><path d="M0.5 10.5l5-6" stroke="#30a0b0" stroke-width="1"/><path d="M4 4l4-3 3 3-4 3z" fill="#30b0c0" stroke="#203040" stroke-width="0.5"/><path d="M5.5 4.5l2 1.5" stroke="#e03020" stroke-width="1.2"/><rect x="7" y="8" width="4" height="3" fill="#8c8cac"/></svg></div>
<div class="tt" style="left:21.1px;top:245.0px;">Free Form Analysis.3</div>
<div class="a" style="left:19px;top:254.0px;width:12px;height:12px"><svg width="11" height="11" viewBox="0 0 11 11"><path d="M1 8l5-3 4 2-5 3z" fill="#2090d0" stroke="#103050" stroke-width="0.4"/><path d="M1 8l3 1.8 0 1" fill="#d02020" stroke="#d02020" stroke-width="0.8"/><path d="M6 1v6" stroke="#e8e020" stroke-width="0.9"/><path d="M4.8 2.5L6 0.8 7.2 2.5" fill="none" stroke="#e8e020" stroke-width="0.8"/></svg></div>
<div class="tt" style="left:30.0px;top:257.5px;">Draft Analysis.4</div>
<div class="a" style="left:19px;top:266.4px;width:12px;height:12px"><svg width="11" height="11" viewBox="0 0 11 11"><path d="M1 8l5-3 4 2-5 3z" fill="#2090d0" stroke="#103050" stroke-width="0.4"/><path d="M1 8l3 1.8 0 1" fill="#d02020" stroke="#d02020" stroke-width="0.8"/><path d="M6 1v6" stroke="#e8e020" stroke-width="0.9"/><path d="M4.8 2.5L6 0.8 7.2 2.5" fill="none" stroke="#e8e020" stroke-width="0.8"/></svg></div>
<div class="tt" style="left:30.0px;top:269.9px;">Draft Analysis.5</div>
<div class="a" style="left:0.5px;top:278.6px;width:12px;height:12px"><svg width="11" height="11" viewBox="0 0 11 11"><circle cx="4.5" cy="5.5" r="3.3" fill="#e8c830"/><circle cx="4.5" cy="5.5" r="1.6" fill="#5050a0"/><circle cx="9.5" cy="1.5" r="1.2" fill="#f0c090"/><circle cx="9.5" cy="9.5" r="1.2" fill="#30d0e0"/></svg></div>
<div class="tt" style="left:12.5px;top:282.4px;background:#f08a1c;padding:0 0.5px;margin-left:-0.5px;">Publication</div>
<div class="a" style="left:10px;top:291.4px;width:12px;height:12px"><svg width="11" height="11" viewBox="0 0 11 11"><path d="M0.5 0.5h7.5l2.5 2.5v7.5h-10z" fill="#fffbe0" stroke="#20c0d0" stroke-width="1"/><path d="M3 9.5l1-7q4-1 3.5 2t-3 2" fill="none" stroke="#222" stroke-width="1"/></svg></div>
<div class="tt" style="left:21.1px;top:294.9px;">Tooling Axis</div>
<div class="a" style="left:10px;top:303.9px;width:12px;height:12px"><svg width="11" height="11" viewBox="0 0 11 11"><path d="M0.5 0.5h7.5l2.5 2.5v7.5h-10z" fill="#fffbe0" stroke="#20c0d0" stroke-width="1"/><path d="M3 9.5l1-7q4-1 3.5 2t-3 2" fill="none" stroke="#222" stroke-width="1"/></svg></div>
<div class="tt" style="left:21.1px;top:307.4px;">CLASS A</div>
<div class="a" style="left:10px;top:316.4px;width:12px;height:12px"><svg width="11" height="11" viewBox="0 0 11 11"><path d="M0.5 0.5h7.5l2.5 2.5v7.5h-10z" fill="#fffbe0" stroke="#20c0d0" stroke-width="1"/><path d="M3 9.5l1-7q4-1 3.5 2t-3 2" fill="none" stroke="#222" stroke-width="1"/></svg></div>
<div class="tt" style="left:21.1px;top:319.9px;">B Surface Final part</div>
<div class="a" style="left:10px;top:328.8px;width:12px;height:12px"><svg width="11" height="11" viewBox="0 0 11 11"><path d="M0.5 0.5h7.5l2.5 2.5v7.5h-10z" fill="#fffbe0" stroke="#20c0d0" stroke-width="1"/><path d="M3 9.5l1-7q4-1 3.5 2t-3 2" fill="none" stroke="#222" stroke-width="1"/></svg></div>
<div class="tt" style="left:21.1px;top:332.3px;">C Surface final part</div>
<div class="a" style="left:784.5px;top:39.5px;width:8px;height:2px;background:#f6f6fc;border-bottom:1px solid #b8b8d0"></div>
<div class="a" style="left:784.5px;top:62.3px;width:8px;height:2px;background:#f6f6fc;border-bottom:1px solid #b8b8d0"></div>
<div class="a" style="left:784.5px;top:85.5px;width:8px;height:2px;background:#f6f6fc;border-bottom:1px solid #b8b8d0"></div>
<div class="a" style="left:784.5px;top:105.5px;width:8px;height:2px;background:#f6f6fc;border-bottom:1px solid #b8b8d0"></div>
<div class="a" style="left:784.5px;top:246.5px;width:8px;height:2px;background:#f6f6fc;border-bottom:1px solid #b8b8d0"></div>
<div class="a" style="left:784.5px;top:361.5px;width:8px;height:2px;background:#f6f6fc;border-bottom:1px solid #b8b8d0"></div>
<div class="a" style="left:784.5px;top:382.5px;width:8px;height:2px;background:#f6f6fc;border-bottom:1px solid #b8b8d0"></div>
<div class="a" style="left:784.5px;top:445.5px;width:8px;height:2px;background:#f6f6fc;border-bottom:1px solid #b8b8d0"></div>
<svg class="a" style="left:785.5px;top:44.3px" width="12" height="12" viewBox="0 0 12 12"><path d="M0.5 6 L11.5 7 L1.5 11.5z" fill="#40c8a0"/><circle cx="5.5" cy="5" r="3.8" fill="#505050"/><circle cx="5.5" cy="5" r="2.6" fill="#b8b8b8"/><circle cx="5.5" cy="5" r="1.5" fill="#404040"/><circle cx="5.5" cy="5" r="0.8" fill="#d0d0d0"/></svg>
<svg class="a" style="left:785.5px;top:67.5px" width="12" height="12" viewBox="0 0 12 12"><path d="M2 1 L2 10 L4.5 7.8 L6.5 11 L8 10.2 L6 7 L9.5 7z" fill="#f0a040" stroke="#c06010" stroke-width="0.6"/><path d="M8.5 10.2h3l-1.5 1.6z" fill="#000"/></svg>
<svg class="a" style="left:785.5px;top:90.5px" width="12" height="12" viewBox="0 0 12 12"><rect x="1" y="2" width="8.5" height="8" fill="#e8eef8" stroke="#203060" stroke-width="0.9"/><path d="M3 8.5 L9 1.5" stroke="#1090d0" stroke-width="1.4"/><path d="M2.5 7 Q4 4 6 6" stroke="#203060" stroke-width="0.6" fill="none"/><path d="M8.5 10.2h3l-1.5 1.6z" fill="#000"/></svg>
<svg class="a" style="left:785.5px;top:110.3px" width="12" height="12" viewBox="0 0 12 12"><rect x="2" y="1" width="8" height="9" fill="#fff" stroke="#181850" stroke-width="1.2"/><path d="M1 11 L1 5 L5 3 L5 9z" fill="#f0e070" stroke="#181850" stroke-width="0.7"/><path d="M8.5 10.2h3l-1.5 1.6z" fill="#000"/></svg>
<svg class="a" style="left:785.5px;top:123.5px" width="12" height="12" viewBox="0 0 12 12"><rect x="1.5" y="1.5" width="8.5" height="8.5" fill="#f0e070" stroke="#181850" stroke-width="1.2"/><path d="M3.5 3.5h3l1.5 1.5v3h-4.5z" fill="#c8c8e0" stroke="#181850" stroke-width="0.6"/><path d="M8.5 10.2h3l-1.5 1.6z" fill="#000"/></svg>
<svg class="a" style="left:785.5px;top:138.3px" width="12" height="12" viewBox="0 0 12 12"><path d="M2 2 Q2 1 3.5 1 H5 V11 H3.5 Q2 11 2 10z" fill="#20a0b0" stroke="#181850" stroke-width="0.7"/><path d="M7 1 H8.5 Q10 1 10 2 V10 Q10 11 8.5 11 H7z" fill="#e8d860" stroke="#181850" stroke-width="0.7"/></svg>
<svg class="a" style="left:785.5px;top:151.5px" width="12" height="12" viewBox="0 0 12 12"><rect x="1" y="2" width="10" height="9" fill="#f0d050" stroke="#181850" stroke-width="0.8"/><path d="M1 2 h10 v2 h-10z" fill="#40c0e0"/><path d="M4 6 h6 v3 h-6z" fill="#2070a0"/><path d="M6 7h4" stroke="#e03030" stroke-width="1"/></svg>
<svg class="a" style="left:785.5px;top:164.7px" width="12" height="12" viewBox="0 0 12 12"><rect x="1.5" y="1.5" width="9" height="9" fill="#f0e070" stroke="#181850" stroke-width="1.2"/><circle cx="6" cy="6" r="2.3" fill="#c8c8e0" stroke="#181850" stroke-width="0.8"/></svg>
<svg class="a" style="left:785.5px;top:179.0px" width="12" height="12" viewBox="0 0 12 12"><path d="M1 10 L5 4 L11 2 L8 8z" fill="#f0e070" stroke="#404060" stroke-width="0.8"/><path d="M1 10h7" stroke="#404060" stroke-width="0.8"/></svg>
<svg class="a" style="left:785.5px;top:191.1px" width="12" height="12" viewBox="0 0 12 12"><path d="M2 10 L2 5 L8 1 L11 3 L11 10z" fill="#fff" stroke="#181850" stroke-width="0.8"/><path d="M3 9 L8 3 L10 5z" fill="#f0e070"/></svg>
<svg class="a" style="left:785.5px;top:205.5px" width="12" height="12" viewBox="0 0 12 12"><rect x="1" y="4" width="8" height="7" fill="#20a0b0" stroke="#181850" stroke-width="0.7"/><path d="M4 1h6v6h-3z" fill="#f0f040" stroke="#181850" stroke-width="0.6"/><path d="M8.5 10.2h3l-1.5 1.6z" fill="#000"/></svg>
<svg class="a" style="left:785.5px;top:217.5px" width="12" height="12" viewBox="0 0 12 12"><path d="M2 11 L2 7 L8 1 L11 3 L11 11z" fill="#fff" stroke="#181850" stroke-width="0.8"/><path d="M3 9 L6 5 L9 4 L7 9z" fill="#f0e070"/><path d="M5 8 L9 6" stroke="#20a0b0" stroke-width="1.2"/></svg>
<svg class="a" style="left:785.5px;top:231.8px" width="12" height="12" viewBox="0 0 12 12"><path d="M1 8 L6 2 L10 4 L8 11 L3 11z" fill="#f0f8ff" stroke="#181850" stroke-width="0.8"/><path d="M3 7 L8 4 L9 7z" fill="#30a0e0"/></svg>
<svg class="a" style="left:785.5px;top:253.1px" width="12" height="12" viewBox="0 0 12 12"><path d="M1 5 Q3 1 7 2 L11 4 L9 9 L2 8z" fill="#f0c080" stroke="#405070" stroke-width="0.6"/><path d="M1 5 L2 8 L7 10 L7 6z" fill="#30b0c8"/><path d="M8.5 10.2h3l-1.5 1.6z" fill="#000"/></svg>
<svg class="a" style="left:785.5px;top:266.3px" width="12" height="12" viewBox="0 0 12 12"><path d="M1 6 L5 2 L10 4 L11 9 L6 11 L1 8z" fill="#f0c080" stroke="#405070" stroke-width="0.6"/><path d="M6 11 L11 9 L10 4 L6 7z" fill="#40a8d0"/></svg>
<svg class="a" style="left:785.5px;top:279.5px" width="12" height="12" viewBox="0 0 12 12"><path d="M2 3 L6 1 L10 3 L10 10 L6 11 L2 10z" fill="#f8f040" stroke="#404060" stroke-width="0.6"/><path d="M6 1 L10 3 L10 10 L7 8z" fill="#8080a0"/><path d="M2 3 L6 1 L9 2 L5 4z" fill="#50c0e0"/><path d="M8.5 10.2h3l-1.5 1.6z" fill="#000"/></svg>
<svg class="a" style="left:785.5px;top:292.7px" width="12" height="12" viewBox="0 0 12 12"><path d="M2 10 L6 1 L10 3 L7 11z" fill="#30a0c0" stroke="#181850" stroke-width="0.7"/><path d="M4 8 L7 3 L8 4 L5 9z" fill="#f0e070"/></svg>
<svg class="a" style="left:785.5px;top:305.9px" width="12" height="12" viewBox="0 0 12 12"><path d="M2 3 L6 1 L11 2 L10 11 L2 10z" fill="#f0f8ff" stroke="#405070" stroke-width="0.6"/><path d="M2 3 L5 3 L5 11 L2 10z" fill="#f0e070"/><path d="M6 3v7M8 4v6" stroke="#30a0e0" stroke-width="1"/></svg>
<svg class="a" style="left:785.5px;top:319.1px" width="12" height="12" viewBox="0 0 12 12"><circle cx="6" cy="6" r="4.8" fill="#f0e070" stroke="#405070" stroke-width="0.8"/><path d="M6 1v10M1 6h10" stroke="#405070" stroke-width="0.7"/></svg>
<svg class="a" style="left:785.5px;top:334.9px" width="12" height="12" viewBox="0 0 12 12"><path d="M1 5 L4 2 L11 2 L11 8 L8 11 L1 11z" fill="#e8e040" stroke="#305050" stroke-width="0.6"/><path d="M1 5h7v6h-7z" fill="#e03020"/><path d="M2 6l5 4M7 6l-5 4" stroke="#f0d020" stroke-width="1"/><path d="M8.5 10.2h3l-1.5 1.6z" fill="#000"/></svg>
<svg class="a" style="left:785.5px;top:346.1px" width="12" height="12" viewBox="0 0 12 12"><path d="M1 4 L4 1 L11 1 L11 8 L8 11 L1 11z" fill="#20b0b0" stroke="#183040" stroke-width="0.7"/><path d="M4 7 L8 4 L7 9z" fill="#f0e070"/></svg>
<svg class="a" style="left:785.5px;top:368.5px" width="12" height="12" viewBox="0 0 12 12"><path d="M1 8 L7 1.5 Q10 1 10.5 3.5 L5 10 Q2 10.5 1 8z" fill="#50c0f0" stroke="#2050a0" stroke-width="0.6"/><ellipse cx="2.5" cy="9" rx="1.6" ry="1.8" fill="#f0a030"/><path d="M8.5 10.2h3l-1.5 1.6z" fill="#000"/></svg>
<svg class="a" style="left:785.5px;top:389.5px" width="12" height="12" viewBox="0 0 12 12"><rect x="1" y="1" width="3.5" height="6" rx="1.5" fill="#e8e8f0" stroke="#404060" stroke-width="0.6"/><rect x="6.5" y="4" width="3.5" height="7" rx="1.5" fill="#3060a0" stroke="#181850" stroke-width="0.6"/><path d="M4 9h2" stroke="#000" stroke-width="0.8"/><path d="M8.5 10.2h3l-1.5 1.6z" fill="#000"/></svg>
<svg class="a" style="left:785.5px;top:402.1px" width="12" height="12" viewBox="0 0 12 12"><rect x="1" y="2" width="3.5" height="8" rx="1.5" fill="#3060a0" stroke="#181850" stroke-width="0.6"/><rect x="7" y="2" width="3.5" height="8" rx="1.5" fill="#3060a0" stroke="#181850" stroke-width="0.6"/><path d="M5 1 L7 3 L7 11 L5 9z" fill="#e0e060"/></svg>
<svg class="a" style="left:785.5px;top:416.1px" width="12" height="12" viewBox="0 0 12 12"><g fill="#3030c0"><circle cx="2" cy="2" r="1.1"/><circle cx="5" cy="2" r="1.1"/><circle cx="8" cy="2" r="1.1"/><circle cx="2" cy="5" r="1.1"/><circle cx="5" cy="5" r="1.1"/><circle cx="8" cy="5" r="1.1"/><circle cx="2" cy="8" r="1.1"/><circle cx="5" cy="8" r="1.1"/><circle cx="8" cy="8" r="1.1"/></g><path d="M8.5 10.2h3l-1.5 1.6z" fill="#000"/></svg>
<svg class="a" style="left:785.5px;top:430.1px" width="12" height="12" viewBox="0 0 12 12"><circle cx="6" cy="6" r="2.6" fill="#30c080" stroke="#203040" stroke-width="1"/><path d="M1 1l2 2M11 1l-2 2M1 11l2-2M11 11l-2-2" stroke="#222" stroke-width="0.9"/><path d="M8.5 10.2h3l-1.5 1.6z" fill="#000"/></svg>
<svg class="a" style="left:8.5px;top:454.8px" width="12" height="12" viewBox="0 0 12 12"><path d="M2 1h6l2.5 2.5V11H2z" fill="#fffbd8" stroke="#707070" stroke-width="0.6"/></svg>
<svg class="a" style="left:21.0px;top:454.8px" width="12" height="12" viewBox="0 0 12 12"><path d="M1 4h4l1 1h5v6H1z" fill="#d8a020" stroke="#705010" stroke-width="0.5"/><path d="M2 11l2-5h8l-2 5z" fill="#f8d040" stroke="#705010" stroke-width="0.5"/></svg>
<svg class="a" style="left:34.9px;top:454.8px" width="12" height="12" viewBox="0 0 12 12"><rect x="1" y="1" width="10" height="10" fill="#303030"/><rect x="3" y="1.5" width="6" height="4" fill="#f0e880"/><rect x="3" y="7" width="6" height="3.5" fill="#808080"/></svg>
<svg class="a" style="left:47.5px;top:454.8px" width="12" height="12" viewBox="0 0 12 12"><path d="M1 6 L4 3 L10 3 L11 6 L11 10 L1 10z" fill="#909090" stroke="#404040" stroke-width="0.5"/><path d="M4 1h5v3H4z" fill="#fff"/><path d="M2 7h8v2H2z" fill="#70b060"/></svg>
<svg class="a" style="left:62.1px;top:454.8px" width="12" height="12" viewBox="0 0 12 12"><path d="M3 1 L8 9M9 1 L4 9" stroke="#a0a0a8" stroke-width="0.9"/><circle cx="3.5" cy="10" r="1.4" fill="none" stroke="#a0a0a8" stroke-width="0.8"/><circle cx="8.5" cy="10" r="1.4" fill="none" stroke="#a0a0a8" stroke-width="0.8"/></svg>
<svg class="a" style="left:74.5px;top:454.8px" width="12" height="12" viewBox="0 0 12 12"><rect x="1" y="1" width="6" height="8" fill="#e8e8f0" stroke="#a8a8b0" stroke-width="0.6"/><rect x="5" y="3" width="6" height="8" fill="#e8e8f0" stroke="#a8a8b0" stroke-width="0.6"/></svg>
<svg class="a" style="left:88.1px;top:454.8px" width="12" height="12" viewBox="0 0 12 12"><rect x="1" y="2" width="7" height="8" fill="#c09040" stroke="#404040" stroke-width="0.5"/><rect x="3" y="1" width="3" height="2" fill="#f0f0f0"/><rect x="5" y="6" width="6" height="5" fill="#5080d0" stroke="#203060" stroke-width="0.5"/></svg>
<svg class="a" style="left:101.1px;top:454.8px" width="12" height="12" viewBox="0 0 12 12"><path d="M3 4 Q8 2 10 6 Q9 9 6 9" fill="none" stroke="#20a040" stroke-width="1.8"/><path d="M1 3 L5 1.5 L4.5 6z" fill="#20a040"/><path d="M8.5 10h3l-1.5 1.8z" fill="#000"/></svg>
<svg class="a" style="left:114.9px;top:454.8px" width="12" height="12" viewBox="0 0 12 12"><path d="M9 4 Q4 2 2 6 Q3 9 6 9" fill="none" stroke="#b0b0b8" stroke-width="1.6"/><path d="M11 3 L7 1.5 L7.5 6z" fill="#b0b0b8"/><path d="M8.5 10h3l-1.5 1.8z" fill="#000"/></svg>
<svg class="a" style="left:127.5px;top:454.8px" width="12" height="12" viewBox="0 0 12 12"><path d="M1 2 L1 10 L3 8 L5 11 L6 10 L4.5 7.5 L7 7.5z" fill="#f0d040" stroke="#806010" stroke-width="0.4"/><text x="6" y="9.5" font-size="9" font-weight="bold" fill="#203080" font-family="Liberation Sans">?</text></svg>
<svg class="a" style="left:150.0px;top:454.8px" width="12" height="12" viewBox="0 0 12 12"><text x="0" y="9.5" font-size="8" font-style="italic" fill="#000" font-family="Liberation Serif">f</text><text x="4" y="9.5" font-size="5.5" fill="#000" font-family="Liberation Sans">(x)</text></svg>
<svg class="a" style="left:162.5px;top:454.8px" width="12" height="12" viewBox="0 0 12 12"><ellipse cx="6" cy="5" rx="5" ry="3.8" fill="#f0f0f0" stroke="#303030" stroke-width="0.8"/><path d="M3 8 L2 11 L5 8.5" fill="#f0f0f0" stroke="#303030" stroke-width="0.6"/><path d="M3.5 4h5M3.5 6h4" stroke="#505050" stroke-width="0.6"/></svg>
<svg class="a" style="left:177.5px;top:454.8px" width="12" height="12" viewBox="0 0 12 12"><rect x="4" y="1.5" width="4" height="9" rx="2" fill="#b8b8b8"/></svg>
<svg class="a" style="left:187.8px;top:454.8px" width="12" height="12" viewBox="0 0 12 12"><rect x="1" y="1" width="10" height="10" fill="#404058"/><rect x="1" y="1" width="10" height="2" fill="#3050e0"/><path d="M8.5 10h3l-1.5 1.8z" fill="#000"/></svg>
<svg class="a" style="left:201.0px;top:454.8px" width="12" height="12" viewBox="0 0 12 12"><circle cx="2" cy="6" r="1.5" fill="#f0a030"/><path d="M2 6 L9 2 M2 6 L9 6 M2 6 L9 10" stroke="#303050" stroke-width="0.6"/><rect x="8" y="1" width="3" height="2.5" fill="#3080e0"/><rect x="8" y="5" width="3" height="2.5" fill="#3080e0"/><rect x="8" y="9" width="3" height="2.5" fill="#3080e0"/></svg>
<svg class="a" style="left:215.5px;top:454.8px" width="12" height="12" viewBox="0 0 12 12"><circle cx="5" cy="4" r="3" fill="none" stroke="#404040" stroke-width="1.2"/><rect x="1.5" y="5" width="7.5" height="6" fill="#707070" stroke="#303030" stroke-width="0.5"/><path d="M8.5 10h3l-1.5 1.8z" fill="#000"/></svg>
<svg class="a" style="left:227.5px;top:454.8px" width="12" height="12" viewBox="0 0 12 12"><rect x="1" y="1" width="3" height="3" fill="#e0c030"/><rect x="1" y="5" width="3" height="3" fill="#40a0c0"/><rect x="1" y="9" width="3" height="2.5" fill="#e0c030"/><path d="M6 1 Q8 6 6 11 M9 4 v4" stroke="#303050" stroke-width="0.8" fill="none"/></svg>
<svg class="a" style="left:249.9px;top:454.8px" width="12" height="12" viewBox="0 0 12 12"><path d="M1 4 L5 6 L8 2 L10 3 L7 7 L11 10 L9 11 L5 8 L2 10z" fill="#40b0e0" stroke="#204060" stroke-width="0.4"/></svg>
<svg class="a" style="left:263.0px;top:454.8px" width="12" height="12" viewBox="0 0 12 12"><rect x="1" y="1" width="10" height="10" fill="#f0f080" stroke="#305070" stroke-width="0.8"/><path d="M2 2 L5 5 M10 2 L7 5 M2 10 L5 7 M10 10 L7 7" stroke="#000" stroke-width="1.2"/></svg>
<svg class="a" style="left:276.5px;top:454.8px" width="12" height="12" viewBox="0 0 12 12"><path d="M6 0.5 L8 3 H7 V5 H9 V4 L11.5 6 L9 8 V7 H7 V9 H8 L6 11.5 L4 9 H5 V7 H3 V8 L0.5 6 L3 4 V5 H5 V3 H4z" fill="#1050c0"/></svg>
<svg class="a" style="left:289.8px;top:454.8px" width="12" height="12" viewBox="0 0 12 12"><ellipse cx="6" cy="6" rx="5" ry="3" fill="#f8c0a0" stroke="#303050" stroke-width="0.6"/><path d="M3 6h6" stroke="#3050a0" stroke-width="1.5"/></svg>
<svg class="a" style="left:303.5px;top:454.8px" width="12" height="12" viewBox="0 0 12 12"><circle cx="4.5" cy="4.5" r="3.5" fill="#e8f0ff" stroke="#202040" stroke-width="1.1"/><path d="M7 7 L11 11" stroke="#202040" stroke-width="1.8"/><path d="M3 4.5h3M4.5 3v3" stroke="#2040c0" stroke-width="0.8"/></svg>
<svg class="a" style="left:316.5px;top:454.8px" width="12" height="12" viewBox="0 0 12 12"><circle cx="4.5" cy="4.5" r="3.5" fill="#e8f0ff" stroke="#202040" stroke-width="1.1"/><path d="M7 7 L11 11" stroke="#202040" stroke-width="1.8"/><path d="M3 4.5h3" stroke="#2040c0" stroke-width="0.8"/></svg>
<svg class="a" style="left:329.5px;top:454.8px" width="12" height="12" viewBox="0 0 12 12"><path d="M1 10 L4 7 L11 7 L8 10z" fill="#30a0c0"/><path d="M6 8 V1" stroke="#f0a020" stroke-width="1"/><path d="M4.5 3 L6 1 L7.5 3" fill="none" stroke="#f0a020" stroke-width="0.8"/></svg>
<svg class="a" style="left:343.5px;top:454.8px" width="12" height="12" viewBox="0 0 12 12"><rect x="1" y="1" width="10" height="10" fill="#2030a0"/><rect x="2" y="2" width="3.5" height="3.5" fill="#30e0ff"/><rect x="6.5" y="2" width="3.5" height="3.5" fill="#30e0ff"/><rect x="2" y="6.5" width="3.5" height="3.5" fill="#30e0ff"/><rect x="6.5" y="6.5" width="3.5" height="3.5" fill="#30e0ff"/></svg>
<svg class="a" style="left:356.3px;top:454.8px" width="12" height="12" viewBox="0 0 12 12"><path d="M1 4 L4 1 L11 1 L11 8 L8 11 L1 11z" fill="#40c8f8" stroke="#1040a0" stroke-width="0.7"/><path d="M1 4 H8 V11 M8 4 L11 1" stroke="#1040a0" stroke-width="0.6" fill="none"/><path d="M8.5 10h3l-1.5 1.8z" fill="#000"/></svg>
<svg class="a" style="left:370.5px;top:454.8px" width="12" height="12" viewBox="0 0 12 12"><rect x="1.5" y="1" width="8" height="9" fill="#fff" stroke="#202040" stroke-width="0.8"/><text x="3" y="8.5" font-size="7.5" font-weight="bold" fill="#202040" font-family="Liberation Sans">?</text><path d="M8.5 10h3l-1.5 1.8z" fill="#000"/></svg>
<svg class="a" style="left:383.3px;top:454.8px" width="12" height="12" viewBox="0 0 12 12"><rect x="1" y="1" width="10" height="10" fill="#30a0c0" stroke="#404060" stroke-width="0.5"/><path d="M1 9 L9 1 L11 3 L3 11z" fill="#f0d040"/></svg>
<svg class="a" style="left:396.1px;top:454.8px" width="12" height="12" viewBox="0 0 12 12"><rect x="1" y="1" width="10" height="10" fill="#30a0d0" stroke="#404060" stroke-width="0.5"/><path d="M3 8 L8 4 L10 6z" fill="#f0d040"/></svg>
<svg class="a" style="left:418.0px;top:454.8px" width="12" height="12" viewBox="0 0 12 12"><path d="M2 4 Q2 1 5 2 L6 4" fill="none" stroke="#2080c0" stroke-width="1.2"/><rect x="1" y="5" width="10" height="6" fill="#e8e8e8" stroke="#303030" stroke-width="0.6"/><path d="M3 7h6M3 9h6" stroke="#303030" stroke-width="0.6"/></svg>
<svg class="a" style="left:440.5px;top:454.8px" width="12" height="12" viewBox="0 0 12 12"><path d="M1 4 H10 M2 2 L1 4 L2 6 M9 2 L11 4 L9 6" stroke="#2060c0" stroke-width="1" fill="none"/><rect x="1" y="7" width="10" height="3.5" fill="#f0c090" stroke="#404040" stroke-width="0.5"/></svg>
<svg class="a" style="left:455.1px;top:454.8px" width="12" height="12" viewBox="0 0 12 12"><rect x="2" y="2" width="8" height="8" fill="#505060" stroke="#202030" stroke-width="0.5"/><rect x="4" y="4" width="4" height="4" fill="#303040"/><rect x="1" y="1" width="3" height="3" fill="#40a0c0"/></svg>
<svg class="a" style="left:468.9px;top:454.8px" width="12" height="12" viewBox="0 0 12 12"><rect x="3" y="2" width="6" height="9" rx="1" fill="#c8a030" stroke="#504010" stroke-width="0.6"/><rect x="4.5" y="0.5" width="3" height="2" fill="#a08020"/></svg>
<svg class="a" style="left:490.2px;top:454.8px" width="12" height="12" viewBox="0 0 12 12"><rect x="1" y="3.5" width="10" height="7" rx="1" fill="#505050" stroke="#202020" stroke-width="0.5"/><circle cx="6" cy="7" r="2.2" fill="#e0e0e0" stroke="#202020" stroke-width="0.6"/><rect x="3" y="2" width="3" height="2" fill="#404040"/></svg>
<svg class="a" style="left:512.5px;top:454.8px" width="12" height="12" viewBox="0 0 12 12"><path d="M2 1 V11 H11" stroke="#303030" stroke-width="0.8" fill="none"/><path d="M4 3h2M4 6h3M4 9h4" stroke="#c03030" stroke-width="1.2"/><path d="M8 3h2M9 6h2" stroke="#505050" stroke-width="1"/></svg>
<svg class="a" style="left:536.9px;top:454.8px" width="12" height="12" viewBox="0 0 12 12"><path d="M1 6 Q1 11 6 11 Q11 11 11 6z" fill="#f08030" stroke="#803010" stroke-width="0.6"/><path d="M3 6 L9 1 L10 2 L5 6" fill="#c06020"/></svg>
<svg class="a" style="left:561.4px;top:454.8px" width="12" height="12" viewBox="0 0 12 12"><path d="M1 7 L5 3 L11 5 L7 10z" fill="#f0e070" stroke="#404040" stroke-width="0.6"/><path d="M5 6 L10 1" stroke="#2050c0" stroke-width="1.3"/><path d="M8.5 10h3l-1.5 1.8z" fill="#000"/></svg>
<svg class="a" style="left:574.1px;top:454.8px" width="12" height="12" viewBox="0 0 12 12"><path d="M1 3 L5 1 L9 3 L5 5z" fill="#f0e070" stroke="#404040" stroke-width="0.5"/><path d="M2 8 L7 5 L11 8 L6 11z" fill="#40a0d0" stroke="#404040" stroke-width="0.5"/><path d="M5 5 Q8 5 8 7" stroke="#2050c0" stroke-width="1" fill="none"/><path d="M8.5 10h3l-1.5 1.8z" fill="#000"/></svg>
<svg class="a" style="left:598.5px;top:454.8px" width="12" height="12" viewBox="0 0 12 12"><path d="M1 8 L6 5 L11 7 L6 10z" fill="#2090d0" stroke="#103050" stroke-width="0.5"/><path d="M1 8 L6 10 L6 11.5 L1 9.5z" fill="#d02020"/><path d="M6 1v6" stroke="#f0e020" stroke-width="1"/></svg>
<svg class="a" style="left:613.25px;top:454.8px" width="12" height="12" viewBox="0 0 12 12"><path d="M1 10 Q3 1 10 3 L11 11z" fill="#2060c0" stroke="#181850" stroke-width="0.5"/><path d="M3 8 Q5 4 9 5" stroke="#f0e020" stroke-width="1.4" fill="none"/></svg>
<svg class="a" style="left:625.5px;top:454.8px" width="12" height="12" viewBox="0 0 12 12"><rect x="1" y="1" width="10" height="10" fill="#f0e8c0" stroke="#303030" stroke-width="0.7"/><circle cx="6" cy="6" r="3" fill="#606060"/><path d="M1 1 L11 11 M11 1 L1 11" stroke="#404040" stroke-width="0.6"/></svg>
<svg class="a" style="left:639.5px;top:454.8px" width="12" height="12" viewBox="0 0 12 12"><path d="M1 3 L10 1 L11 3 L2 5z" fill="#e03030"/><path d="M1 6 L10 4 L11 6 L2 8z" fill="#30a040"/><path d="M1 9 L10 7 L11 9 L2 11z" fill="#3080c0"/></svg>
<svg class="a" style="left:663.25px;top:454.8px" width="12" height="12" viewBox="0 0 12 12"><circle cx="6" cy="6" r="5" fill="none" stroke="#909090" stroke-width="1.3"/><circle cx="6" cy="6" r="2.5" fill="none" stroke="#909090" stroke-width="1.2"/></svg>
<svg class="a" style="left:675.5px;top:454.8px" width="12" height="12" viewBox="0 0 12 12"><circle cx="6" cy="6" r="5" fill="#f08030"/><path d="M4 4 Q6 2 8 5 Q8 8 5 9" stroke="#fff" stroke-width="1" fill="none"/></svg>
<svg class="a" style="left:689.5px;top:454.8px" width="12" height="12" viewBox="0 0 12 12"><path d="M4 1 V7 L1 11 M4 7 L11 9" stroke="#303050" stroke-width="0.9" fill="none"/><circle cx="4" cy="7" r="1" fill="#f0a030"/></svg>
<svg class="a" style="left:702.0px;top:454.8px" width="12" height="12" viewBox="0 0 12 12"><text x="0" y="5.5" font-size="5.5" fill="#202050" font-family="Liberation Sans" font-weight="bold">10.1</text><text x="0" y="11" font-size="5.5" fill="#202050" font-family="Liberation Sans" font-weight="bold">10.0</text></svg>
<svg class="a" style="left:717.0px;top:454.8px" width="12" height="12" viewBox="0 0 12 12"><ellipse cx="6" cy="2.5" rx="4.5" ry="1.8" fill="#60d0f0" stroke="#203060" stroke-width="0.6"/><path d="M1.5 2.5 V9.5 Q6 12 10.5 9.5 V2.5" fill="#40a8d0" stroke="#203060" stroke-width="0.6"/><path d="M1.5 6 Q6 8 10.5 6" stroke="#203060" stroke-width="0.5" fill="none"/><path d="M8.5 10h3l-1.5 1.8z" fill="#000"/></svg>
<svg class="a" style="left:729.5px;top:454.8px" width="12" height="12" viewBox="0 0 12 12"><circle cx="3" cy="3" r="2" fill="#2080c0"/><path d="M3 3 L8 7 L5 11" stroke="#e02020" stroke-width="1.3" fill="none"/><circle cx="9.5" cy="8" r="1.8" fill="#3090d0"/></svg>
<svg class="a" style="left:744.5px;top:454.8px" width="12" height="12" viewBox="0 0 12 12"><ellipse cx="5" cy="2" rx="3.5" ry="1.3" fill="#40a0d0"/><rect x="1.5" y="2" width="7" height="2.5" fill="#50b0e0"/><rect x="1.5" y="5" width="7" height="2.5" fill="#50b0e0"/><rect x="1.5" y="8" width="7" height="2.5" fill="#50b0e0"/><path d="M8.5 10h3l-1.5 1.8z" fill="#000"/></svg>
<svg class="a" style="left:757.0px;top:454.8px" width="12" height="12" viewBox="0 0 12 12"><path d="M1 7 L6 2 L11 5 L6 10z" fill="#60b8f0" stroke="#203080" stroke-width="0.8"/></svg>
<div class="a" style="left:2.0px;top:453px;width:2px;height:9px;background:#f8f8fc;border-right:1px solid #b0b0c8"></div>
<div class="a" style="left:144.5px;top:453px;width:2px;height:9px;background:#f8f8fc;border-right:1px solid #b0b0c8"></div>
<div class="a" style="left:244.5px;top:453px;width:2px;height:9px;background:#f8f8fc;border-right:1px solid #b0b0c8"></div>
<div class="a" style="left:413.0px;top:453px;width:2px;height:9px;background:#f8f8fc;border-right:1px solid #b0b0c8"></div>
<div class="a" style="left:436.5px;top:453px;width:2px;height:9px;background:#f8f8fc;border-right:1px solid #b0b0c8"></div>
<div class="a" style="left:484.9px;top:453px;width:2px;height:9px;background:#f8f8fc;border-right:1px solid #b0b0c8"></div>
<div class="a" style="left:507.2px;top:453px;width:2px;height:9px;background:#f8f8fc;border-right:1px solid #b0b0c8"></div>
<div class="a" style="left:532.5px;top:453px;width:2px;height:9px;background:#f8f8fc;border-right:1px solid #b0b0c8"></div>
<div class="a" style="left:556.1px;top:453px;width:2px;height:9px;background:#f8f8fc;border-right:1px solid #b0b0c8"></div>
<div class="a" style="left:594.3px;top:453px;width:2px;height:9px;background:#f8f8fc;border-right:1px solid #b0b0c8"></div>
<div class="a" style="left:657.5px;top:453px;width:2px;height:9px;background:#f8f8fc;border-right:1px solid #b0b0c8"></div>
<svg class="a" style="left:776px;top:450px" width="22" height="17" viewBox="0 0 22 17"><path d="M6 2 Q10 1 11 3 Q10 6 7 7" stroke="#e03030" stroke-width="1.3" fill="none"/><path d="M2 11 L5 4 Q9 4 9 7 Q8 11 3 11z" fill="none" stroke="#403090" stroke-width="1.3"/><path d="M14 5 Q10 5 11 7.5 Q14 9 12 11 Q10 12 8 11" stroke="#f0a020" stroke-width="1.3" fill="none"/><text x="4" y="16.5" font-size="5.5" font-style="italic" font-weight="bold" fill="#403090" font-family="Liberation Sans">CATIA</text></svg>
<div class="t" style="left:771px;top:454px;font-size:5px;color:#b0b0c0">&#x00bb;</div>
</body></html>
